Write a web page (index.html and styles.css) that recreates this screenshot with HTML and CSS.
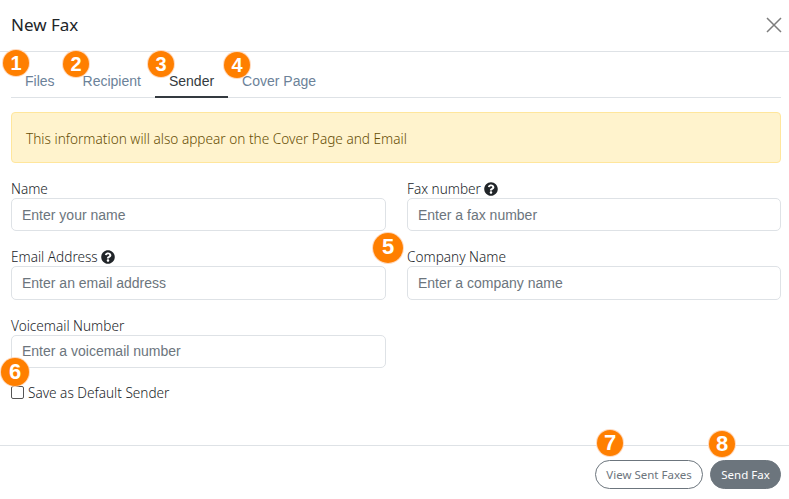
FILE: index.html
```html
<!DOCTYPE html>
<html lang="en">
<head>
<meta charset="utf-8">
<title>New Fax</title>
<link rel="stylesheet" href="styles.css">
</head>
<body>
<div class="modal">
  <header class="modal-header">
    <h1 class="modal-title">New Fax</h1>
    <svg class="close-icon" viewBox="0 0 16 16" width="16" height="16" aria-label="Close"><path d="M1 1L15 15M15 1L1 15" fill="none" stroke="#7d7d7d" stroke-width="1.5"/></svg>
  </header>
  <main class="modal-body">
    <nav class="tabs">
      <a class="tab">Files</a>
      <a class="tab">Recipient</a>
      <a class="tab active">Sender</a>
      <a class="tab">Cover Page</a>
    </nav>
    <div class="alert">This information will also appear on the Cover Page and Email</div>
    <form class="form-grid">
      <div class="field">
        <label class="field-label">Name</label>
        <input class="field-input" placeholder="Enter your name">
      </div>
      <div class="field">
        <label class="field-label">Fax number <svg class="help" viewBox="0 0 512 512"><path d="M504 256c0 137-111 248-248 248S8 393 8 256 119 8 256 8s248 111 248 248zM262.700 90c-54.500 0-89.300 23-116.600 63.800-3.500 5.300-2.400 12.400 2.700 16.300l34.700 26.300c5.200 3.900 12.600 3 16.700-2.100 17.900-22.700 30.100-35.800 57.300-35.800 20.400 0 45.700 13.100 45.700 32.900 0 15-12.400 22.700-32.600 34-23.600 13.200-54.800 29.700-54.800 70.900V302c0 6.600 5.400 12 12 12h56c6.600 0 12-5.400 12-12v-1.300c0-28.600 83.500-29.800 83.500-107.100C379.200 135.300 318.700 90 262.700 90zM256 339c-25.500 0-46.200 20.700-46.200 46.200 0 25.500 20.700 46.200 46.200 46.200s46.200-20.700 46.200-46.200c0-25.500-20.700-46.200-46.200-46.200z" fill="#212529"/></svg></label>
        <input class="field-input" placeholder="Enter a fax number">
      </div>
      <div class="field">
        <label class="field-label">Email Address <svg class="help" viewBox="0 0 512 512"><path d="M504 256c0 137-111 248-248 248S8 393 8 256 119 8 256 8s248 111 248 248zM262.700 90c-54.500 0-89.300 23-116.600 63.800-3.500 5.300-2.400 12.400 2.700 16.300l34.700 26.300c5.200 3.900 12.600 3 16.700-2.100 17.900-22.700 30.100-35.800 57.300-35.800 20.400 0 45.700 13.100 45.700 32.900 0 15-12.400 22.700-32.600 34-23.600 13.200-54.800 29.700-54.800 70.900V302c0 6.600 5.400 12 12 12h56c6.600 0 12-5.400 12-12v-1.300c0-28.600 83.500-29.800 83.500-107.100C379.200 135.300 318.700 90 262.700 90zM256 339c-25.500 0-46.200 20.700-46.200 46.200 0 25.500 20.700 46.200 46.200 46.200s46.200-20.700 46.200-46.200c0-25.500-20.700-46.200-46.200-46.200z" fill="#212529"/></svg></label>
        <input class="field-input" placeholder="Enter an email address">
      </div>
      <div class="field">
        <label class="field-label">Company Name</label>
        <input class="field-input" placeholder="Enter a company name">
      </div>
      <div class="field">
        <label class="field-label">Voicemail Number</label>
        <input class="field-input" placeholder="Enter a voicemail number">
      </div>
    </form>
    <label class="check-row"><span class="checkbox"></span>Save as Default Sender</label>
  </main>
  <footer class="modal-footer">
    <button class="btn btn-outline" type="button">View Sent Faxes</button>
    <button class="btn btn-solid" type="button">Send Fax</button>
  </footer>
</div>
<span class="marker m1">1</span>
<span class="marker m2">2</span>
<span class="marker m3">3</span>
<span class="marker m4">4</span>
<span class="marker m5">5</span>
<span class="marker m6">6</span>
<span class="marker m7">7</span>
<span class="marker m8">8</span>
</body>
</html>
```
FILE: styles.css
```css
* { box-sizing: border-box; }
html, body { margin: 0; padding: 0; background: #fff; }
body {
  position: relative;
  width: 789px;
  height: 499px;
  overflow: hidden;
  font-family: "Noto Sans", "Open Sans", sans-serif;
  color: #212529;
}
.modal { display: flex; flex-direction: column; height: 499px; }
.modal-header {
  height: 52px;
  flex: none;
  display: flex;
  align-items: center;
  justify-content: space-between;
  padding: 0 7px 1px 11px;
  border-bottom: 1px solid #dee2e6;
}
.modal-title { margin: 0; font-size: 17px; font-weight: 400; line-height: 1.2; color: #212529; }
.close-icon { display: block; }
.modal-body { flex: 1; padding: 0 8px 0 11px; }
.tabs {
  display: flex;
  height: 46px;
  padding-top: 18px;
  border-bottom: 1px solid #dee2e6;
}
.tab {
  height: 28px;
  padding: 1px 14px 0;
  margin-bottom: -1px;
  font: 14px/20px "Liberation Sans", Arial, sans-serif;
  color: #6c8299;
}
.tab.active { color: #343a40; border-bottom: 2px solid #343a40; }
.alert {
  margin-top: 14px;
  height: 51px;
  padding: 1px 14px 0;
  display: flex;
  align-items: center;
  background: #fff3cd;
  border: 1px solid #ffe69c;
  border-radius: 4px;
  font-size: 13.640px;
  font-weight: 300;
  color: #664d03;
}
.form-grid {
  display: grid;
  grid-template-columns: 375px 374px;
  column-gap: 21px;
  row-gap: 15.900px;
  margin-top: 16px;
}
.field { display: flex; flex-direction: column; }
.field-label {
  height: 19px;
  font-size: 13.600px;
  font-weight: 300;
  line-height: 19px;
  color: #212529;
  display: flex;
  align-items: center;
  gap: 3px;
}
.help { width: 14px; height: 14px; display: block; }
.field-input {
  height: 33.400px;
  padding: 0 10px;
  border: 1px solid #dee2e6;
  border-radius: 5px;
  font: 14px "Liberation Sans", Arial, sans-serif;
  color: #212529;
  background: #fff;
  outline: 0;
}
.field-input::placeholder { color: #6c757d; opacity: 1; }
.check-row {
  display: flex;
  align-items: center;
  gap: 4px;
  margin-top: 16px;
  height: 18px;
  font-size: 13.600px;
  font-weight: 300;
  color: #212529;
}
.checkbox {
  width: 13px;
  height: 13px;
  border: 1px solid #555;
  border-radius: 2px;
  background: #fff;
}
.modal-footer {
  height: 54px;
  flex: none;
  display: flex;
  justify-content: flex-end;
  gap: 7px;
  padding: 14px 8px 0 0;
  border-top: 1px solid #dee2e6;
}
.btn {
  height: 29px;
  padding: 0;
  border-radius: 15px;
  font-family: "Noto Sans", "Open Sans", sans-serif;
  font-size: 11.500px;
  font-weight: 400;
}
.btn-outline { width: 108px; background: #fff; border: 1px solid #6c757d; color: #6c757d; }
.btn-solid { width: 71px; background: #6c757d; border: 1px solid #6c757d; color: #fff; }
.marker {
  position: absolute;
  width: 26px;
  height: 26px;
  border-radius: 50%;
  background: #ff7f00;
  box-shadow: 0 0 0 1px #ffd9bd;
  color: #fff;
  font: 700 20px/26px "Liberation Sans", Arial, sans-serif;
  text-align: center;
}
.m1 { left: 3px; top: 50px; }
.m2 { left: 63px; top: 51px; }
.m3 { left: 148px; top: 51px; }
.m4 { left: 224px; top: 52px; }
.m5 { left: 373px; top: 233px; width: 30px; height: 30px; line-height: 28px; font-size: 22px; }
.m6 { left: 1px; top: 358px; width: 28px; height: 28px; line-height: 28px; font-size: 22px; }
.m7 { left: 597px; top: 430px; font-size: 22px; }
.m8 { left: 709px; top: 431px; font-size: 22px; }
```
